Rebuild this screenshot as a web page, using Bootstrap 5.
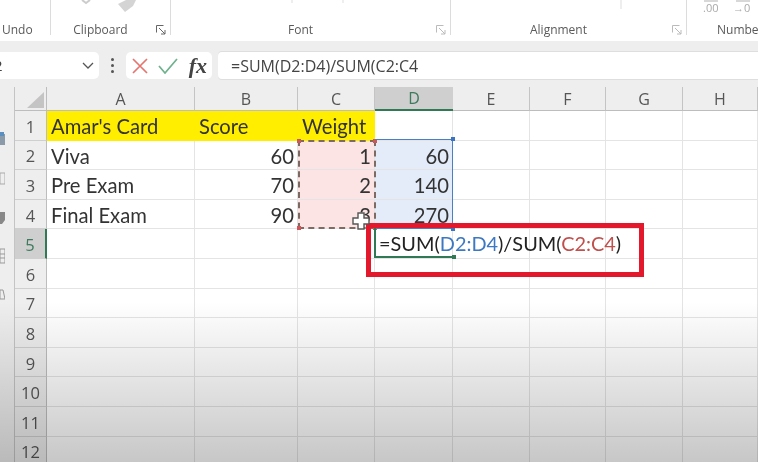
<!DOCTYPE html>
<html lang="en">
<head>
<meta charset="utf-8">
<title>Excel weighted average</title>
<link href="https://cdn.jsdelivr.net/npm/bootstrap@5.3.0/dist/css/bootstrap.min.css" rel="stylesheet">
<style>
html,body{margin:0;height:462px;width:758px;overflow:hidden;background:#fff}
.app{width:758px;height:462px;overflow:hidden;position:relative;filter:blur(.4px);font-family:"Open Sans","Liberation Sans",sans-serif;color:#444}
.ribbon{height:41px;background:#fff;position:relative}
.rgroup{flex:none;height:35px;font-size:12px;line-height:10px;color:#5a5a5a;border-right:1px solid #dcdcdc;position:relative}
.g-undo{width:51px;padding-left:2px}
.g-clip{width:120px;padding-right:20px}
.g-font{width:280px;padding-right:20px}
.g-align{width:236px;padding-right:20px}
.g-num{width:71px;border-right:0;padding-left:30px;white-space:nowrap;overflow:hidden}
.launch{position:absolute;right:4px;bottom:0;width:10px;height:10px}
.gridbar{height:46px;background:#eeeeee;padding:11px 0 8px 0}
.namebox{width:99px;height:27px;background:#fff;border-radius:0 5px 5px 0;font-size:15px;padding-right:5px;color:#444;overflow:hidden}
.nametxt{margin-left:-6px}
.dots{width:27px;gap:3px}
.dots i{display:block;width:3px;height:3px;border-radius:50%;background:#555}
.fxbox{width:86px;height:27px;background:#fff;border-radius:5px;padding:0 5px 0 6px}
.fxtxt{font-family:"Liberation Serif",serif;font-style:italic;font-weight:700;font-size:22px;line-height:1;color:#444}
.fbox{flex:1;margin-left:6px;height:27px;background:#fff;border-radius:4px 0 0 4px;font-size:16px;padding-left:13px;color:#444;box-shadow:0 -1px 0 #dedede,0 1px 0 #dedede}
.sheetarea{position:relative;height:375px;background:#eeeeee}
.strip{flex:0 0 15px;height:375px;background:#eee;border-right:1px solid #c4c4c4}
.sheet{table-layout:fixed;border-collapse:separate;border-spacing:0;width:743px;font-family:Lato,"Liberation Sans",sans-serif;margin:0}
.c0{width:32px}.ca{width:148px}.cb{width:103px}.cc{width:77px}.cd{width:78px}.ce{width:77px}.cf{width:76px}.cg{width:77px}.ch{width:75px}
.sheet th{height:23px;background:#eee;font:400 16px "Open Sans",sans-serif;color:#555;text-align:center;padding:0;border-right:1px solid #c4c4c4;border-bottom:1px solid #bdbdbd}
.sheet th.sel{background:#cfcfcf;color:#3d7a5e;border-bottom:2px solid #2f7a55;border-right:0}
.sheet th.corner{position:relative;border-right:1px solid #bdbdbd}
.corner svg{position:absolute;right:2px;bottom:2px}
.sheet td{height:29.6px;padding:2px 3px 0 4px;font-size:20.2px;line-height:1;color:#333;background:#fff;border-right:1px solid #e4e4e4;border-bottom:1px solid #e4e4e4;white-space:nowrap;overflow:visible}
.sheet td.rh{background:#eee;font:400 16.5px "Open Sans",sans-serif;color:#555;text-align:center;border-right:1px solid #bdbdbd;border-bottom:1px solid #cfcfcf;padding:2px 0 0}
.sheet td.rh.sel{background:#cfcfcf;color:#3d7a5e;border-right:2px solid #2f7a55}
.sheet td.hy{background:#ffee00;border-color:#ffee00;color:#333}
.sheet td.pk{background:#fce4e4}
.sheet td.bl{background:#e4ebf9}
.num{text-align:right}
.marquee,.bluebox,.activebox,.redbox,.shade,.cursor{position:absolute;pointer-events:none}
.marquee{left:298px;top:53px;width:78px;height:89px;border:2px dashed #7d6b63}
.bluebox{left:375px;top:52px;width:78px;height:90px;border:1.5px solid #4a7fc4;border-left:0}
.handle{position:absolute;width:4px;height:4px}
.h-r{background:#d0555a}.h-b{background:#3b73c0}.h-g{background:#2f7a55}
.activebox{left:374px;top:141px;width:79px;height:30px;border:2px solid #2f7a55;border-top:0;border-right:0}
.p-tl{left:-3px;top:-3px}.p-tr{right:-3px;top:-3px}.p-bl{left:-3px;bottom:-3px}.p-br{right:-3px;bottom:-3px}
.flyout{position:absolute;left:379px;top:147px;font:400 19.9px/1 Lato,sans-serif;color:#222;white-space:nowrap;z-index:3}
.t-blue{color:#3d78c2}.t-red{color:#c0504d}
.redbox{left:366px;top:136px;width:278px;height:54px;border:5px solid #e3182d;z-index:2}
.cursor{left:352px;top:125px;z-index:4}
.shade{left:0;right:0;top:215px;bottom:0;background:linear-gradient(180deg,rgba(0,0,0,0),rgba(0,0,0,.22));z-index:5}
.ribbits{position:absolute;left:0;top:0}
</style>
</head>
<body>
<div class="app">
  <div class="ribbon d-flex">
    <div class="rgroup g-undo d-flex align-items-end">Undo</div>
    <div class="rgroup g-clip d-flex align-items-end justify-content-center">Clipboard
      <svg class="launch" viewBox="0 0 10 10"><path d="M.5.5h7M.5.5v7M3 3l6 6M9 5v4H5" fill="none" stroke="#666"/></svg></div>
    <div class="rgroup g-font d-flex align-items-end justify-content-center">Font
      <svg class="launch" viewBox="0 0 10 10"><path d="M.5.5h7M.5.5v7M3 3l6 6M9 5v4H5" fill="none" stroke="#bbb"/></svg></div>
    <div class="rgroup g-align d-flex align-items-end justify-content-center">Alignment
      <svg class="launch" viewBox="0 0 10 10"><path d="M.5.5h7M.5.5v7M3 3l6 6M9 5v4H5" fill="none" stroke="#bbb"/></svg></div>
    <div class="rgroup g-num d-flex align-items-end">Number</div>
    <svg class="ribbits" width="758" height="20" viewBox="0 0 758 20">
      <path d="M118 4l8-4h10l-3 6-8 6z" fill="#d4d4d4"/><path d="M82 0l4 3 4-3" fill="none" stroke="#ccc" stroke-width="2"/>
      <path d="M292 0v3M343 0v3" stroke="#ddd"/><path d="M621 0v9" stroke="#ddd"/>
      <text x="703" y="12" font-size="11" fill="#aaa" font-family="Open Sans">.00</text><text x="733" y="12" font-size="11" fill="#aaa" font-family="Open Sans">→0</text>
      <path d="M704 1h14M736 1h14" stroke="#ccc" stroke-width="1.5"/>
    </svg>
  </div>
  <div class="gridbar d-flex">
    <div class="namebox d-flex align-items-center justify-content-between">
      <span class="nametxt">2</span>
      <svg width="12" height="7" viewBox="0 0 12 7"><path d="M1 1l5 5 5-5" fill="none" stroke="#555" stroke-width="1.3"/></svg>
    </div>
    <div class="dots d-flex flex-column align-items-center justify-content-center"><i></i><i></i><i></i></div>
    <div class="fxbox d-flex align-items-center justify-content-between">
      <svg width="16" height="16" viewBox="0 0 16 16"><path d="M1 1l14 14M15 1L1 15" stroke="#e5766f" stroke-width="1.7"/></svg>
      <svg width="20" height="16" viewBox="0 0 20 16"><path d="M1 8l6 7L19 1" fill="none" stroke="#6fb18d" stroke-width="1.7"/></svg>
      <span class="fxtxt">fx</span>
    </div>
    <div class="fbox d-flex align-items-center">=SUM(D2:D4)/SUM(C2:C4</div>
  </div>
  <div class="sheetarea d-flex">
    <div class="strip">
      <svg width="5" height="375" viewBox="0 0 5 375">
        <path d="M0 47h5v11H0z" fill="#8a9aa8"/><path d="M0 45h4v4H0z" fill="#5b8fc0"/>
        <path d="M0 86h5v11H0z" fill="none" stroke="#aaa"/>
        <path d="M0 125h5v8l-3 4H0z" fill="#888"/>
        <path d="M0 162h5v14H0zM0 167h5M0 171h5" fill="none" stroke="#999"/>
        <path d="M0 203l3 0 2 9H0z" fill="none" stroke="#999"/>
      </svg>
    </div>
    <table class="sheet">
      <colgroup><col class="c0"><col class="ca"><col class="cb"><col class="cc"><col class="cd"><col class="ce"><col class="cf"><col class="cg"><col class="ch"></colgroup>
      <thead><tr>
        <th class="corner"><svg width="17" height="16" viewBox="0 0 17 16"><path d="M17 0v16H0z" fill="#c4c4c4"/></svg></th>
        <th>A</th><th>B</th><th>C</th><th class="sel">D</th><th>E</th><th>F</th><th>G</th><th>H</th>
      </tr></thead>
      <tbody>
        <tr><td class="rh">1</td><td class="hy">Amar's Card</td><td class="hy">Score</td><td class="hy">Weight</td><td></td><td></td><td></td><td></td><td></td></tr>
        <tr><td class="rh">2</td><td>Viva</td><td class="num">60</td><td class="num pk">1</td><td class="num bl">60</td><td></td><td></td><td></td><td></td></tr>
        <tr><td class="rh">3</td><td>Pre Exam</td><td class="num">70</td><td class="num pk">2</td><td class="num bl">140</td><td></td><td></td><td></td><td></td></tr>
        <tr><td class="rh">4</td><td>Final Exam</td><td class="num">90</td><td class="num pk">3</td><td class="num bl">270</td><td></td><td></td><td></td><td></td></tr>
        <tr><td class="rh sel">5</td><td></td><td></td><td></td><td></td><td></td><td></td><td></td><td></td></tr>
        <tr><td class="rh">6</td><td></td><td></td><td></td><td></td><td></td><td></td><td></td><td></td></tr>
        <tr><td class="rh">7</td><td></td><td></td><td></td><td></td><td></td><td></td><td></td><td></td></tr>
        <tr><td class="rh">8</td><td></td><td></td><td></td><td></td><td></td><td></td><td></td><td></td></tr>
        <tr><td class="rh">9</td><td></td><td></td><td></td><td></td><td></td><td></td><td></td><td></td></tr>
        <tr><td class="rh">10</td><td></td><td></td><td></td><td></td><td></td><td></td><td></td><td></td></tr>
        <tr><td class="rh">11</td><td></td><td></td><td></td><td></td><td></td><td></td><td></td><td></td></tr>
        <tr><td class="rh">12</td><td></td><td></td><td></td><td></td><td></td><td></td><td></td><td></td></tr>
      </tbody>
    </table>
    <div class="marquee"><span class="handle h-r p-tl"></span><span class="handle h-r p-tr"></span><span class="handle h-r p-bl"></span><span class="handle h-r p-br"></span></div>
    <div class="bluebox"><span class="handle h-b p-tr"></span><span class="handle h-b p-br"></span></div>
    <div class="activebox"><span class="handle h-g p-br"></span></div>
    <div class="flyout">=SUM(<span class="t-blue">D2:D4</span>)/SUM(<span class="t-red">C2:C4</span>)</div>
    <div class="redbox"></div>
    <svg class="cursor" width="18" height="18" viewBox="0 0 18 18"><path d="M6 1h6v5h5v6h-5v5H6v-5H1V6h5z" fill="#fff" stroke="#555" stroke-width="1.4"/></svg>
    <div class="shade"></div>
  </div>
</div>
</body>
</html>
